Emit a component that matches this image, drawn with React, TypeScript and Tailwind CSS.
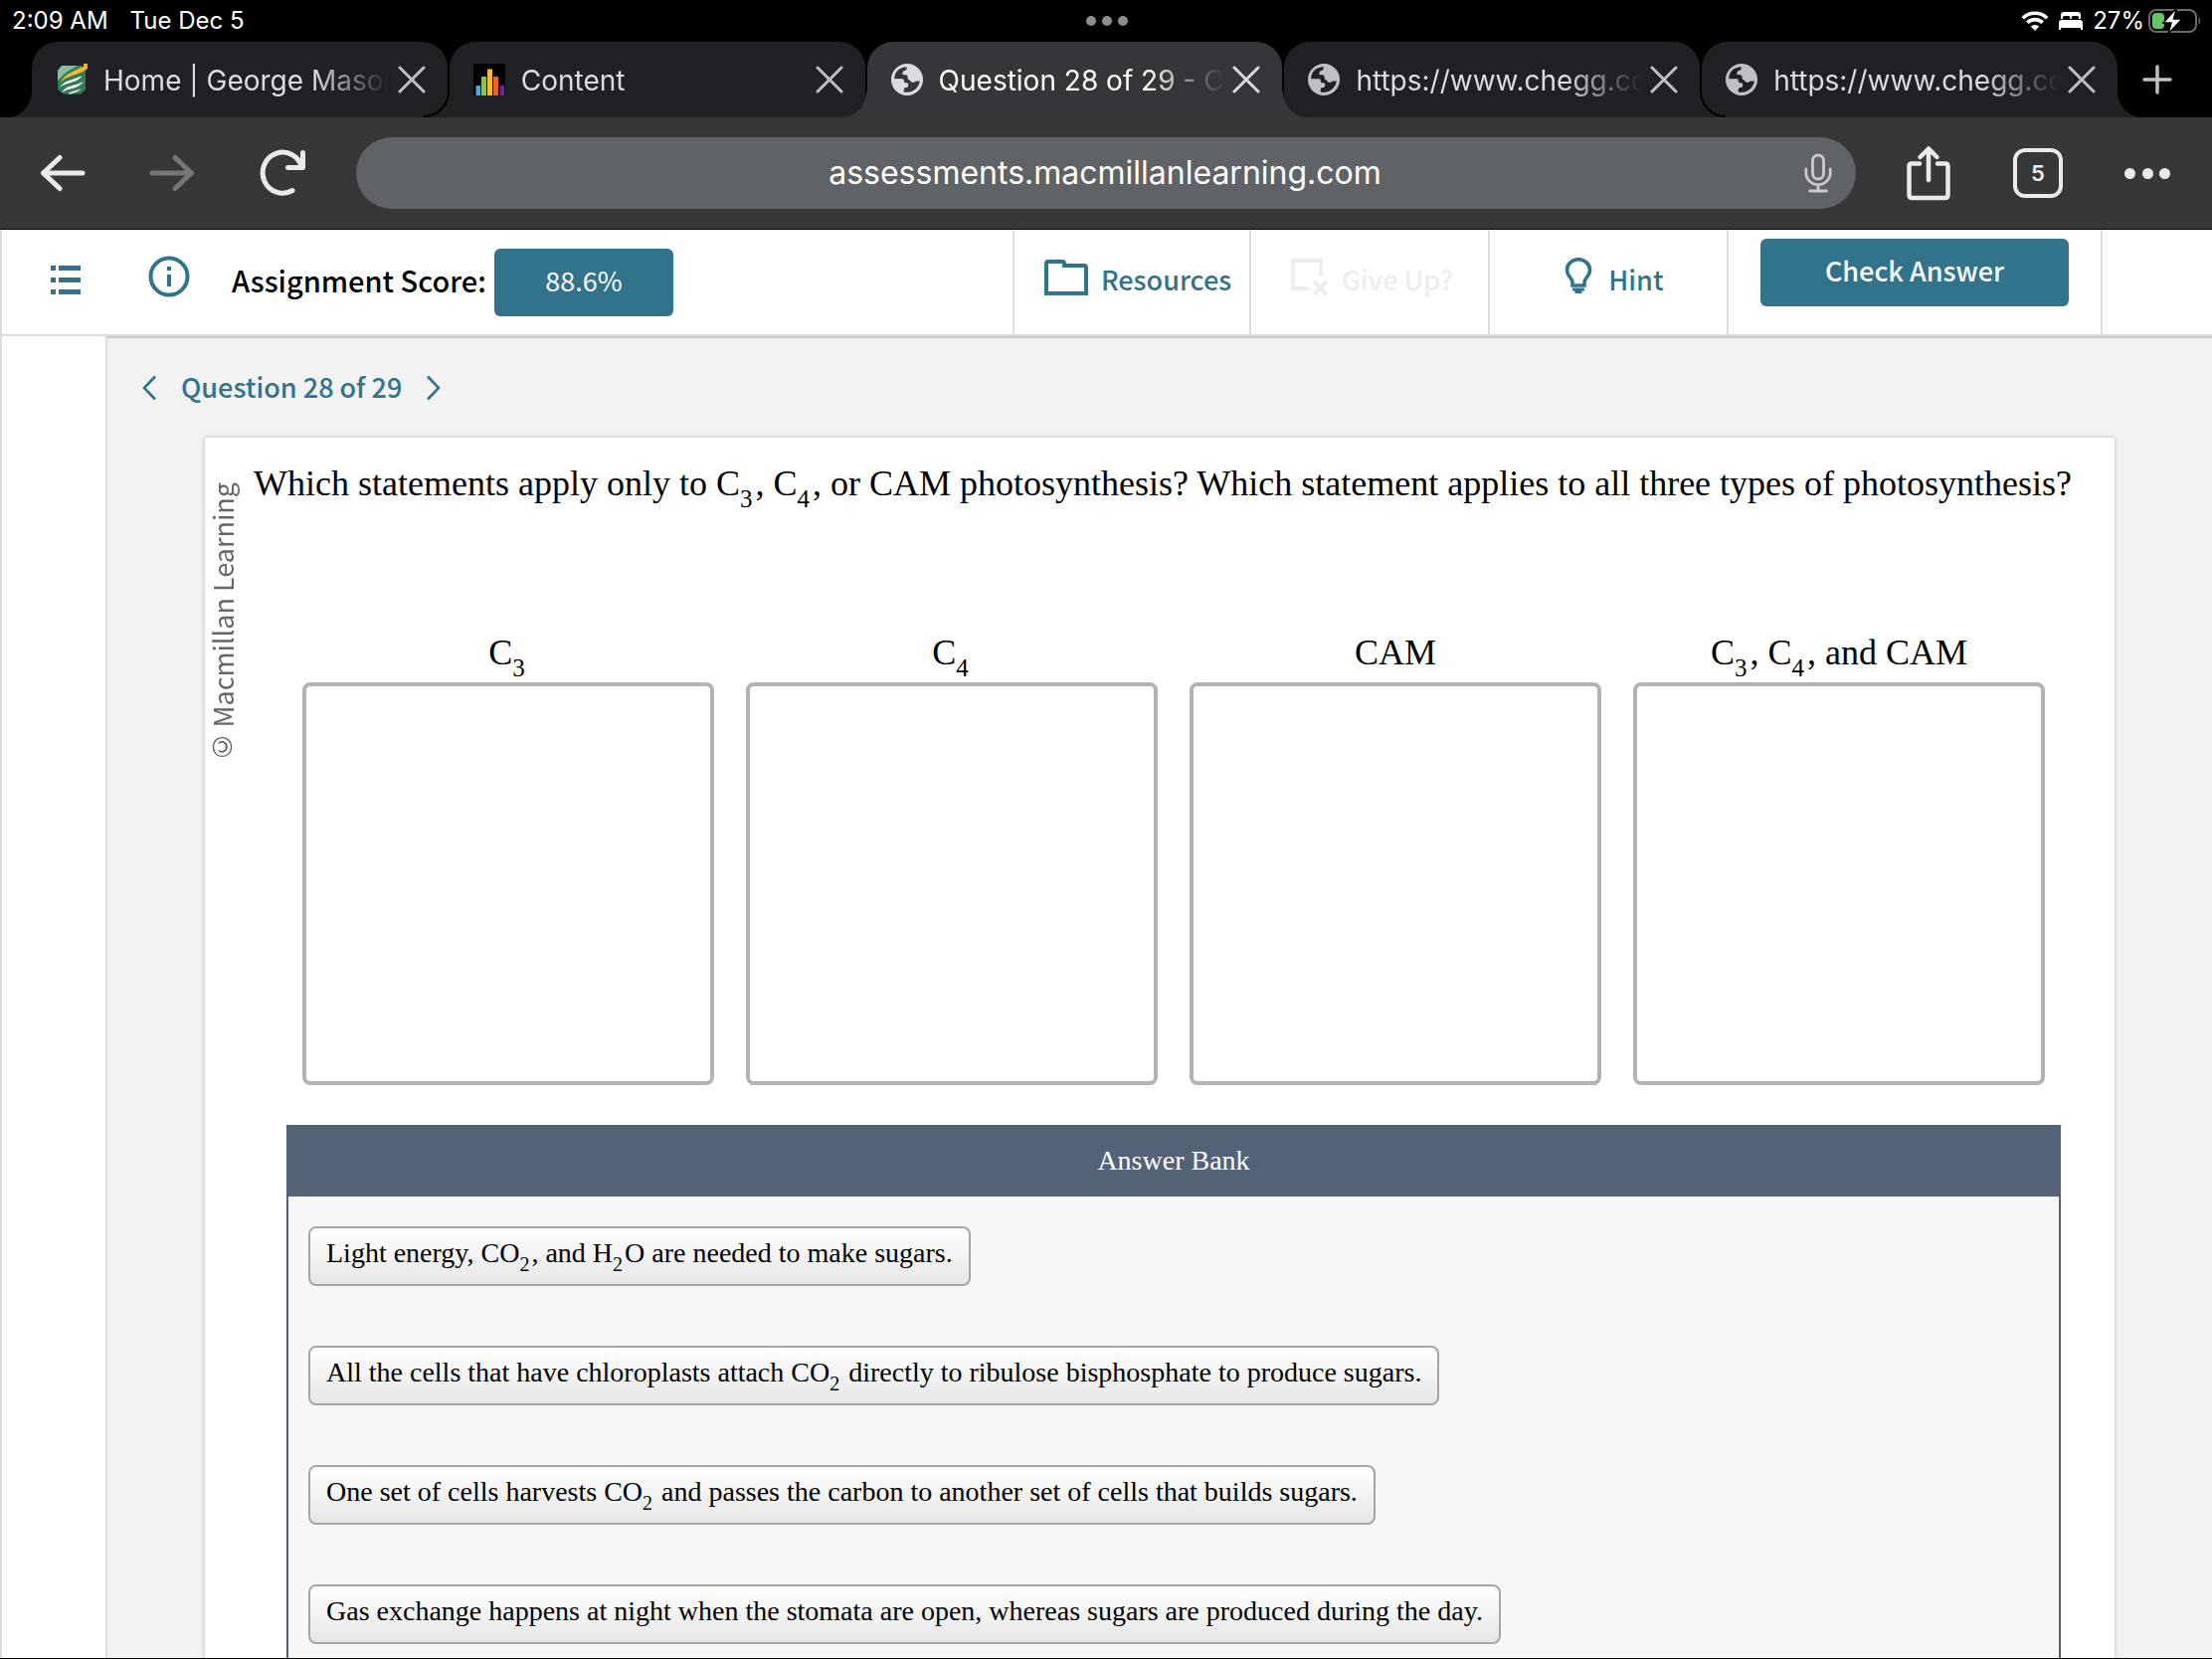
import type { ReactNode } from 'react';

const TEAL = 'text-[#32738c]';

function GlobeIcon({ active }: { active?: boolean }) {
  return (
    <svg viewBox="0 0 32 32" className="size-8 shrink-0" aria-hidden="true">
      <circle cx="16" cy="16" r="16" fill={active ? '#dadce0' : '#bdc1c6'} />
      <path
        d="M3.2 15.2C3.4 11 5 7.600 8 5.600C10 4.300 12.500 3.500 15.600 3.300V5.200Q15.600 6.500 14.200 6.800L12.800 7.200Q11.500 7.600 11.500 9V11.200H15Q16.600 11.500 16.600 13.200V14.800Q16.800 16.400 18.500 16.400L20 18.200Q21 19.300 23 18.800Q24.600 17.600 26 17.600H28.800C28 23.500 23.500 28.600 16 28.800H12.800V25.600Q13 24 14.800 24H15.800Q17.200 23.600 17.200 22V20.600Q16.800 19.200 15.200 19.200H14Q12.800 19 12.800 17.600V16.600Q12.600 15.200 11.200 15.200Z"
        fill={active ? '#35363a' : '#202124'}
      />
    </svg>
  );
}

function ShieldIcon() {
  return (
    <svg viewBox="0 0 32 32" className="size-8 shrink-0" aria-hidden="true">
      <path d="M6 2H26L30 6V26L25 30.500H8L2 26V7Z" fill="#2f7d55" />
      <path d="M6 2H22L10 9L2 17V7Z" fill="#8dbb9f" />
      <path d="M4 20C9 10 18 8 25 4L28 3V0H32V5C24 12 11 11 4 20Z" fill="#f2b634" />
      <path d="M4 24C9 16 17 17 27 12C21 20 11 18 4 24Z" fill="#fff" />
      <path d="M6 29C11 21 19 23 28 18C22 26 13 24 6 29Z" fill="#fff" />
      <path d="M12 30.500C16 27 21 27 26 25C23 29 18 29 16 30.500Z" fill="#cfe3d7" />
    </svg>
  );
}

function BarsIcon() {
  return (
    <svg viewBox="0 0 32 32" className="size-8 shrink-0" aria-hidden="true">
      <path d="M0 0H32V32H0Z" fill="#000" />
      <path d="M2.500 22H7V32H2.500Z" fill="#4aa8e0" />
      <path d="M8 13H13V32H8Z" fill="#8cc152" />
      <path d="M14 5.500H19V32H14Z" fill="#f6bb36" />
      <path d="M20 13H25V32H20Z" fill="#e8603c" />
      <path d="M26.500 22H31V32H26.500Z" fill="#6a2c91" />
    </svg>
  );
}

function CloseIcon() {
  return (
    <svg viewBox="0 0 28 28" className="size-7" fill="none" stroke="currentColor" strokeWidth="3" strokeLinecap="round" aria-hidden="true">
      <path d="M2 2L26 26M26 2L2 26" />
    </svg>
  );
}

function Foot({ side, active }: { side: 'left' | 'right'; active?: boolean }) {
  return (
    <svg
      viewBox="0 0 26 26"
      className={side === 'left' ? 'absolute bottom-0 -left-[26px] size-[26px]' : 'absolute bottom-0 -right-[26px] size-[26px] -scale-x-100'}
      aria-hidden="true"
    >
      <path d="M25 0A25 25 0 0 1 0 26H26V0Z" fill={active ? '#35363a' : '#202124'} />
      {!active && <path d="M25 0A25 25 0 0 1 0 25" fill="none" stroke="#000" strokeWidth="2" />}
    </svg>
  );
}

type TabData = { title: string; icon: ReactNode; active?: boolean; layer: string };

const tabs: TabData[] = [
  { title: 'Home | George Mason', icon: <ShieldIcon />, layer: 'z-0' },
  { title: 'Content', icon: <BarsIcon />, layer: 'z-10' },
  { title: 'Question 28 of 29 - C', icon: <GlobeIcon active />, active: true, layer: 'z-30' },
  { title: 'https://www.chegg.co', icon: <GlobeIcon />, layer: 'z-20' },
  { title: 'https://www.chegg.co', icon: <GlobeIcon />, layer: 'z-10' },
];

function Tab({ title, icon, active, layer }: TabData) {
  return (
    <div
      role="tab"
      aria-selected={!!active}
      className={`relative flex min-w-0 flex-1 items-center rounded-t-[26px] pr-[22px] pl-6 ${layer} ${active ? 'bg-[#35363a] text-white' : 'bg-[#202124] text-[#dcdde1]'}`}
    >
      <Foot side="left" active={active} />
      <Foot side="right" active={active} />
      {icon}
      <span className="ml-4 min-w-0 flex-1 overflow-hidden pt-[2px] text-[28px] leading-9 whitespace-nowrap [mask-image:linear-gradient(to_right,#000_73%,transparent)]">
        {title}
      </span>
      <button aria-label={`Close ${title}`} className={`ml-2 shrink-0 ${active ? 'text-[#dadce0]' : 'text-[#bdc1c6]'}`}>
        <CloseIcon />
      </button>
    </div>
  );
}

function StatusBar() {
  return (
    <div className="grid h-[42px] grid-cols-3 items-center pr-[10px] pl-3 text-[24px] leading-8 text-white">
      <div className="flex gap-[22px]">
        <span>2:09 AM</span>
        <span>Tue Dec 5</span>
      </div>
      <div className="flex justify-center gap-[6px]">
        <i className="size-[10px] rounded-full bg-[#8e8e8e]" />
        <i className="size-[10px] rounded-full bg-[#8e8e8e]" />
        <i className="size-[10px] rounded-full bg-[#8e8e8e]" />
      </div>
      <div className="flex items-center justify-end">
        <svg viewBox="0 0 28 20" className="mr-[10px] h-5 w-7" fill="none" stroke="#fff" aria-hidden="true">
          <path d="M1.800 7.200A17.500 17.500 0 0 1 26.200 7.200" strokeWidth="3.600" />
          <path d="M6.300 11.800A11 11 0 0 1 21.700 11.800" strokeWidth="3.600" />
          <path d="M14 20L9.800 15.600A6 6 0 0 1 18.200 15.600Z" fill="#fff" stroke="none" />
        </svg>
        <svg viewBox="0 0 24 18" className="mr-[10px] h-[18px] w-6" fill="#fff" aria-hidden="true">
          <path d="M2 7V3Q2 0 5 0H19Q22 0 22 3V7H20V5.500Q20 4 18.500 4H14Q12.800 4 12.800 5.500V7H11.200V5.500Q11.200 4 10 4H5.500Q4 4 4 5.500V7Z" />
          <path d="M0 18V11Q0 8 3 8H21Q24 8 24 11V18H22V16H2V18Z" />
        </svg>
        <span>27%</span>
        <svg viewBox="0 0 54 26" className="ml-1 h-[26px] w-[54px]" aria-hidden="true">
          <rect x="1" y="2" width="47" height="22" rx="7" fill="none" stroke="#6b6b6b" strokeWidth="2" />
          <path d="M50.500 9Q54 13 50.500 17Z" fill="#6b6b6b" />
          <rect x="4" y="5" width="12" height="16" rx="4" fill="#65c466" />
          <path d="M28.500 0L15 15H23L20 26L34 11H25.500Z" fill="#fff" stroke="#000" strokeWidth="1.500" />
        </svg>
      </div>
    </div>
  );
}

function TabStrip() {
  return (
    <div className="flex h-[76px]">
      <div role="tablist" className="flex min-w-0 flex-1 gap-[2px] pl-8">
        {tabs.map((t, i) => (
          <Tab key={i} {...t} />
        ))}
      </div>
      <button aria-label="New tab" className="flex w-[95px] items-center pl-[25px] text-[#bdc1c6]">
        <svg viewBox="0 0 30 30" className="size-[30px]" stroke="currentColor" strokeWidth="3.500" strokeLinecap="round" aria-hidden="true">
          <path d="M15 2V28M2 15H28" />
        </svg>
      </button>
    </div>
  );
}

function Toolbar() {
  return (
    <div className="flex h-[113px] items-center border-b border-black bg-[#363739] pr-[42px] pl-10 text-[#e8eaed]">
      <button aria-label="Back">
        <svg viewBox="0 0 46 40" className="h-10 w-[46px]" fill="none" stroke="currentColor" strokeWidth="5" strokeLinecap="round" strokeLinejoin="round" aria-hidden="true">
          <path d="M20 4.500L3.500 20L20 35.500M4 20H43" />
        </svg>
      </button>
      <button aria-label="Forward" disabled className="ml-16 text-[#757678]">
        <svg viewBox="0 0 46 40" className="h-10 w-[46px]" fill="none" stroke="currentColor" strokeWidth="5" strokeLinecap="round" strokeLinejoin="round" aria-hidden="true">
          <path d="M26 4.500L42.500 20L26 35.500M42 20H3" />
        </svg>
      </button>
      <button aria-label="Reload" className="ml-16">
        <svg viewBox="0 0 48 48" className="size-12" fill="none" stroke="currentColor" strokeWidth="5" strokeLinecap="round" strokeLinejoin="round" aria-hidden="true">
          <path d="M34 41.500A20 20.500 0 1 1 43.500 18.500" />
          <path d="M44.500 3.500V18.500H29.500" />
        </svg>
      </button>
      <div className="ml-[50px] flex h-[72px] min-w-0 flex-1 items-center rounded-full bg-[#5f6267] pr-[24px] pl-[50px]">
        <input
          aria-label="Address"
          defaultValue="assessments.macmillanlearning.com"
          className="h-12 min-w-0 flex-1 bg-transparent pb-[2px] text-center text-[32px] leading-[46px] text-white outline-none"
        />
        <button aria-label="Voice search" className="text-[#c9cbce]">
          <svg viewBox="0 0 28 40" className="h-10 w-7" fill="none" stroke="currentColor" strokeWidth="2.800" strokeLinecap="round" aria-hidden="true">
            <rect x="8.500" y="2" width="11" height="24" rx="5.500" />
            <path d="M1.800 16V19.500A12.200 12.200 0 0 0 26.200 19.500V16M14 32V38M5.500 38H22.500" />
          </svg>
        </button>
      </div>
      <button aria-label="Share" className="ml-[50px]">
        <svg viewBox="0 0 46 56" className="h-14 w-[46px]" fill="none" stroke="currentColor" strokeWidth="4.500" strokeLinecap="round" strokeLinejoin="round" aria-hidden="true">
          <path d="M14 18.500H6Q3.500 18.500 3.500 21V50Q3.500 53 6.500 53H39.500Q42.500 53 42.500 50V21Q42.500 18.500 40 18.500H32" />
          <path d="M23 35V4M14.500 12L23 3.500L31.500 12" />
        </svg>
      </button>
      <button aria-label="5 open tabs" className="ml-[62px] flex h-[50px] w-[50px] items-center justify-center rounded-[12px] border-4 border-[#e8eaed] text-[22px] leading-7 font-semibold">
        5
      </button>
      <button aria-label="More" className="ml-[62px] flex w-[46px] justify-between">
        <i className="size-[11px] rounded-full bg-[#e8eaed]" />
        <i className="size-[11px] rounded-full bg-[#e8eaed]" />
        <i className="size-[11px] rounded-full bg-[#e8eaed]" />
      </button>
    </div>
  );
}

function AssignmentHeader() {
  const cell = 'flex items-center justify-center border-l-2 border-[#ddd] pb-[6px] font-medium';
  return (
    <header className="flex h-[107px] border-b-2 border-[#ddd] bg-white pl-12 text-[27px] leading-10">
      <button aria-label="Assignment contents" className={`flex items-center pb-1 ${TEAL}`}>
        <svg viewBox="0 0 32 30" className="h-[30px] w-8" fill="currentColor" aria-hidden="true">
          <path d="M1 0H6V5H1ZM9 0H31V5H9ZM1 12H6V17H1ZM9 12H31V17H9ZM1 24H6V29H1ZM9 24H31V29H9Z" />
        </svg>
      </button>
      <button aria-label="Assignment information" className={`ml-[67px] flex items-center pb-3 ${TEAL}`}>
        <svg viewBox="0 0 42 42" className="size-[42px]" fill="none" stroke="currentColor" strokeWidth="4" aria-hidden="true">
          <circle cx="21" cy="21" r="18.500" />
          <path d="M21 19V31M21 11V15" />
        </svg>
      </button>
      <div className="ml-[42px] flex items-center">
        <span className="pb-[6px] text-[29px] font-medium">Assignment Score:</span>
        <button className="ml-2 h-[68px] w-[180px] rounded-[6px] bg-[#32738c] pb-1 text-white">88.6%</button>
      </div>
      <div className="flex-1" />
      <button className={`${cell} w-[238px] gap-[13px] pl-3 ${TEAL}`}>
        <svg viewBox="0 0 44 36" className="-mt-1 h-9 w-11" fill="none" stroke="currentColor" strokeWidth="4" aria-hidden="true">
          <path d="M2 34V4Q2 2 4 2H18Q20 2 20 4V6H40Q42 6 42 8V34Z" strokeLinejoin="miter" />
        </svg>
        Resources
      </button>
      <button disabled className={`${cell} w-[240px] gap-3 pl-1 text-[#eee]`}>
        <svg viewBox="0 0 40 40" className="-mt-1 size-10" fill="none" stroke="currentColor" strokeWidth="4" aria-hidden="true">
          <path d="M19 31H3V3H31V19" strokeLinejoin="round" />
          <path d="M24 24L37 37M37 24L24 37" />
        </svg>
        Give Up?
      </button>
      <button className={`${cell} w-[240px] gap-4 pl-3 ${TEAL}`}>
        <svg viewBox="0 0 28 36" className="-mt-2 h-9 w-7" fill="none" stroke="currentColor" strokeWidth="3.600" aria-hidden="true">
          <path d="M8 28V24.500C8 21 2.500 18.500 2.500 12.500A11.500 10.800 0 0 1 25.500 12.500C25.500 18.500 20 21 20 24.500V28Z" />
          <path d="M8 32H20M10.500 34.500H17.500" strokeWidth="3" />
        </svg>
        Hint
      </button>
      <div className="flex w-[376px] items-start justify-center border-l-2 border-[#ddd] pt-[9px]">
        <button className="h-[68px] w-[310px] rounded-[6px] bg-[#32738c] pb-1 font-medium text-white">Check Answer</button>
      </div>
      <div className="w-[112px] border-l-2 border-[#ddd]" />
    </header>
  );
}

function Chevron({ flip }: { flip?: boolean }) {
  return (
    <svg viewBox="0 0 16 26" className={flip ? 'h-[26px] w-4 -scale-x-100' : 'h-[26px] w-4'} fill="none" stroke="currentColor" strokeWidth="2.600" aria-hidden="true">
      <path d="M14 1.500L3 13L14 24.500" />
    </svg>
  );
}

function QuestionNav() {
  return (
    <nav className={`flex h-[100px] items-center gap-6 pl-[34px] ${TEAL}`}>
      <button aria-label="Previous question">
        <Chevron />
      </button>
      <a href="#question" className="pb-[2px] text-[27px] leading-10 font-medium">
        Question 28 of 29
      </a>
      <button aria-label="Next question">
        <Chevron flip />
      </button>
    </nav>
  );
}

function Sub({ children, small }: { children: string; small?: boolean }) {
  return (
    <sub className={small ? 'static mr-[2px] align-[-9px] text-[20px] leading-[0]' : 'static mr-[3px] align-[-12px] text-[25px] leading-[0]'}>
      {children}
    </sub>
  );
}

const bins: { key: string; label: ReactNode }[] = [
  { key: 'c3', label: <>C<Sub>3</Sub></> },
  { key: 'c4', label: <>C<Sub>4</Sub></> },
  { key: 'cam', label: 'CAM' },
  { key: 'all', label: <>C<Sub>3</Sub>, C<Sub>4</Sub>, and CAM</> },
];

const answers: ReactNode[] = [
  <>Light energy, CO<Sub small>2</Sub>, and H<Sub small>2</Sub>O are needed to make sugars.</>,
  <>All the cells that have chloroplasts attach CO<Sub small>2</Sub> directly to ribulose bisphosphate to produce sugars.</>,
  <>One set of cells harvests CO<Sub small>2</Sub> and passes the carbon to another set of cells that builds sugars.</>,
  'Gas exchange happens at night when the stomata are open, whereas sugars are produced during the day.',
];

function QuestionCard() {
  return (
    <section id="question" className="mx-[98px] flex flex-1 bg-white shadow-[0_0_4px_rgba(0,0,0,0.25)]">
      <div className="w-[49px] shrink-0 pt-[45px] pl-[2px]">
        <span className="inline-block rotate-180 text-[27px] leading-8 whitespace-nowrap text-[#666] [writing-mode:vertical-rl]">
          © Macmillan Learning
        </span>
      </div>
      <div className="flex min-w-0 flex-1 flex-col pt-[22px] font-['Liberation_Serif',serif] text-black">
        <p className="text-[36px] leading-[48px]">
          Which statements apply only to C<Sub>3</Sub>, C<Sub>4</Sub>, or CAM photosynthesis? Which statement applies to all three types of photosynthesis?
        </p>
        <div className="mt-[122px] mr-[54px] ml-[33px] flex flex-1 flex-col">
          <div className="grid grid-cols-4 gap-8 px-4">
            {bins.map((b) => (
              <div key={b.key}>
                <h2 className="pb-[6px] text-center text-[36px] leading-[48px]">{b.label}</h2>
                <div className="h-[405px] rounded-[8px] border-4 border-[#b3b3b3]" />
              </div>
            ))}
          </div>
          <div className="mt-10 flex flex-1 flex-col border-x-2 border-[#546278] bg-[#f7f7f7] text-[28px]">
            <h3 className="bg-[#546278] text-center leading-[72px] text-white">Answer Bank</h3>
            <ul className="flex flex-col items-start gap-[60px] px-5 pt-[30px]">
              {answers.map((a, i) => (
                <li key={i} className="flex">
                  <button className="h-[60px] rounded-[8px] border-2 border-[#a6a6a6] bg-linear-to-b from-white to-[#e6e6e6] px-4 pb-[6px] leading-[50px] whitespace-nowrap">
                    {a}
                  </button>
                </li>
              ))}
            </ul>
          </div>
        </div>
      </div>
    </section>
  );
}

export default function App() {
  return (
    <div className="flex min-h-screen flex-col overflow-hidden border-b border-black bg-white font-['Noto_Sans_CJK_SC',sans-serif] text-black">
      <div className="bg-black font-['Inter',sans-serif]">
        <StatusBar />
        <TabStrip />
        <Toolbar />
      </div>
      <div className="flex flex-1 flex-col border-l-2 border-[#ddd]">
        <AssignmentHeader />
        <div className="flex flex-1">
          <aside className="w-[106px] border-r-2 border-[#ddd] bg-white" />
          <main className="flex min-w-0 flex-1 flex-col border-t-2 border-[#ccc] bg-[#f2f2f2]">
            <QuestionNav />
            <QuestionCard />
          </main>
        </div>
      </div>
    </div>
  );
}
